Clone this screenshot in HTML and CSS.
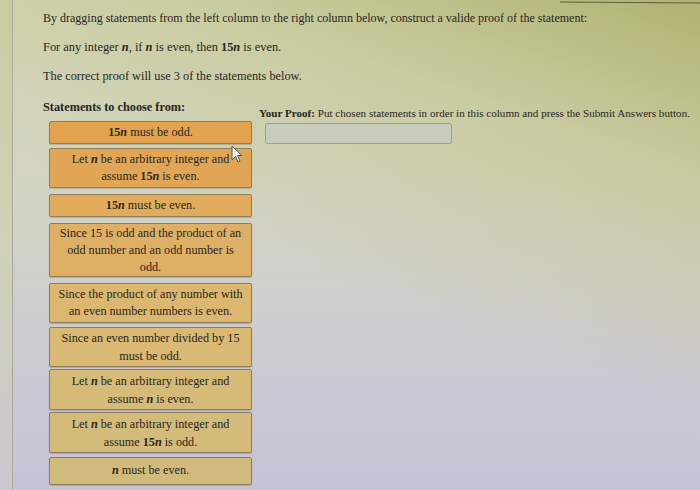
FILE: index.html
```html
<!DOCTYPE html>
<html>
<head>
<meta charset="utf-8">
<link rel="stylesheet" href="styles.css">
</head>
<body>
<div class="screen">
  <div class="strip"></div>
  <div class="content">
    <p class="line l1">By dragging statements from the left column to the right column below, construct a valide proof of the statement:</p>
    <p class="line l2">For any integer <b><i>n</i></b>, if <b><i>n</i></b> is even, then <b>15<i>n</i></b> is even.</p>
    <p class="line l3">The correct proof will use 3 of the statements below.</p>
    <div class="cols">
      <div class="left">
        <div class="head">Statements to choose from:</div>
        <div class="cards">
          <div class="card c1"><b>15<i>n</i></b> must be odd.</div>
          <div class="card c2">Let <b><i>n</i></b> be an arbitrary integer and<br>assume <b>15<i>n</i></b> is even.</div>
          <div class="card c3"><b>15<i>n</i></b> must be even.</div>
          <div class="card c4">Since 15 is odd and the product of an<br>odd number and an odd number is<br>odd.</div>
          <div class="card c5">Since the product of any number with<br>an even number numbers is even.</div>
          <div class="card c6">Since an even number divided by 15<br>must be odd.</div>
          <div class="card c7">Let <b><i>n</i></b> be an arbitrary integer and<br>assume <b><i>n</i></b> is even.</div>
          <div class="card c8">Let <b><i>n</i></b> be an arbitrary integer and<br>assume <b>15<i>n</i></b> is odd.</div>
          <div class="card c9"><b><i>n</i></b> must be even.</div>
        </div>
      </div>
      <div class="right">
        <div class="rhead"><b>Your Proof:</b> Put chosen statements in order in this column and press the Submit Answers button.</div>
        <div class="drop"></div>
      </div>
    </div>
  </div>
  <svg class="cursor" width="14" height="20" viewBox="0 0 14 20"><path d="M1 1 L1 15 L4.5 11.5 L7 17 L9 16 L6.5 10.5 L11 10.5 Z" fill="#f4f4f0" stroke="#555" stroke-width="1"/></svg>
  <div class="bezel"></div>
</div>
</body>
</html>
```
FILE: styles.css
```css
html, body { margin: 0; padding: 0; }
body {
  width: 700px;
  height: 490px;
  overflow: hidden;
  font-family: "Liberation Serif", "Times New Roman", serif;
  color: #2a2620;
}
.screen {
  position: relative;
  width: 700px;
  height: 490px;
  display: flex;
  background:
    linear-gradient(200deg, rgba(170,172,100,0.85) 0%, rgba(190,192,130,0.5) 25%, rgba(210,212,190,0) 55%),
    linear-gradient(180deg, #d6d9bf 0%, #d3d5c2 35%, #cfcfcc 60%, #c9c6d6 85%, #c7c3d6 100%);
}
.strip {
  width: 12px;
  flex: none;
  border-right: 1px solid #a9ab95;
  background: linear-gradient(180deg, #c9cd9f 0%, #cfd2b8 50%, #cac7cf 100%);
}
.content {
  flex: 1;
  padding: 11px 0 0 30px;
}
.line {
  margin: 0;
  font-size: 12px;
  line-height: 14px;
}
.l1 { margin-bottom: 15px; }
.l2 { margin-bottom: 15px; font-size: 12.4px; }
.l3 { margin-bottom: 17px; font-size: 12.3px; }
.cols { display: flex; }
.left { width: 216px; flex: none; }
.head {
  font-weight: bold;
  font-size: 12.3px;
  line-height: 14px;
  margin-bottom: 7px;
}
.cards {
  display: flex;
  flex-direction: column;
  gap: 4px;
  padding-left: 6px;
}
.card {
  box-sizing: border-box;
  width: 203px;
  border: 1px solid #8f7d5c;
  border-radius: 2px;
  font-size: 12.2px;
  line-height: 17px;
  text-align: center;
  white-space: nowrap;
  padding: 2px 0;
  box-shadow: 0 1px 1px rgba(80,70,50,0.25);
}
.c1 { background: #e3a24e; height: 23px; }
.c2 { background: #e0a656; height: 40px; }
.c3 { background: #e0ab5b; height: 23px; margin-top: 2px; }
.c4 { background: #deb066; height: 54px; padding-top: 1px; margin-top: 2px; }
.c5 { background: #dcb76f; height: 40px; margin-top: 2px; }
.c6 { background: #dab974; height: 40px; line-height: 18px; padding-top: 1px; }
.c7 { background: #d6bb78; height: 41px; line-height: 18px; padding-top: 2px; margin-top: -2px; }
.c8 { background: #d3bb7a; height: 41px; line-height: 18px; padding-top: 2px; margin-top: -2px; }
.c9 { background: #d1bb7c; height: 28px; padding-top: 4px; }
.right { flex: 1; padding-top: 6px; }
.rhead {
  font-size: 11.1px;
  line-height: 14px;
  margin-bottom: 3px;
  white-space: nowrap;
}
.drop {
  width: 185px;
  height: 19px;
  margin-left: 6px;
  border: 1px solid #9aa096;
  border-radius: 3px;
  background: #c6cdbc;
}
.cursor {
  position: absolute;
  left: 231px;
  top: 145px;
}
.bezel {
  position: absolute;
  left: 560px;
  top: 2px;
  width: 140px;
  height: 1px;
  background: #5d5f3a;
  transform: rotate(0.4deg);
}
```
